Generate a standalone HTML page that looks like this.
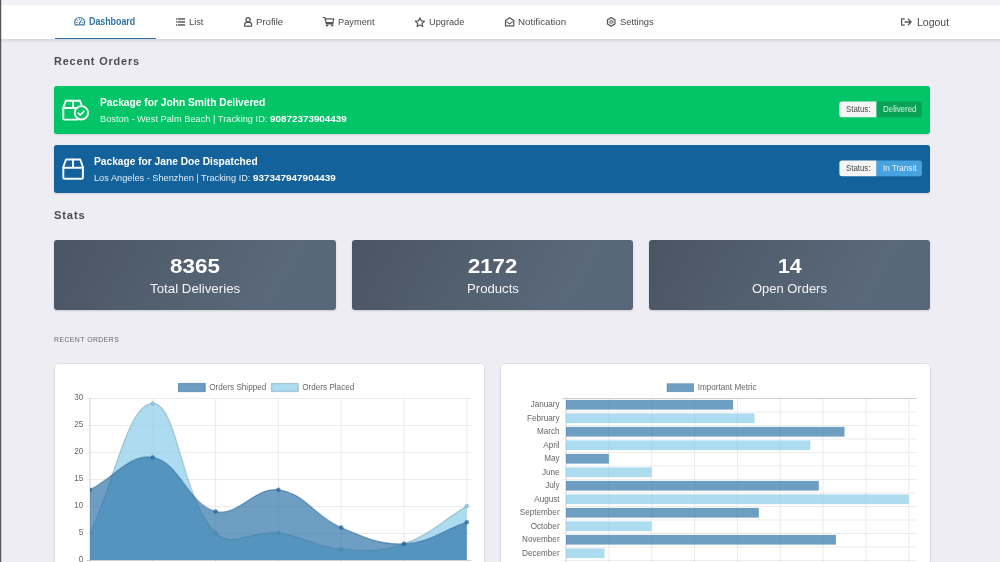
<!DOCTYPE html>
<html><head><meta charset="utf-8"><title>Dashboard</title>
<style>
*{box-sizing:border-box;margin:0;padding:0}
html,body{width:1000px;height:562px;overflow:hidden}
body{background:#ededf3;font-family:"Liberation Sans",sans-serif;position:relative;color:#4a4a4a}
.abs{position:absolute}
.nav{position:absolute;left:-10px;top:5px;width:1020px;height:34px;background:#fff;box-shadow:0 1px 4px rgba(10,10,10,.15)}
.edge{position:absolute;left:0;top:0;width:1px;height:562px;background:#54545a;box-shadow:0.4px 0 0.6px rgba(80,80,90,.55)}
.strip{position:absolute;left:0;top:0;width:1000px;height:5px;background:linear-gradient(#f3f3f7 0,#f3f3f7 3.4px,#ebebf0 4.1px,#f6f6f9 5px)}
.uline{position:absolute;left:54.5px;top:37.6px;width:101.3px;height:1.4px;background:#3273a6}
.tx{position:absolute;white-space:nowrap;transform-origin:0 50%;line-height:normal}
.card{position:absolute;left:54px;width:876.4px;height:48px;border-radius:2.7px;box-shadow:0 1px 2px rgba(10,10,10,.12)}
.tag{position:absolute;height:16px}
.stat{position:absolute;top:240px;height:70px;border-radius:3px;box-shadow:0 1px 2px rgba(10,10,10,.15);
 background:linear-gradient(120deg,#4a5564 0%,#525f6e 40%,#5a687b 76%,#58667a 100%)}
.box{position:absolute;top:363.8px;height:210px;background:#fff;border-radius:3.5px;box-shadow:0 0 0 .8px rgba(10,10,10,.06),0 2px 5px -1px rgba(10,10,10,.1)}
.tl{position:absolute;left:0;top:0;width:1000px;height:562px;will-change:transform}
.tick{position:absolute;font-size:8.15px;line-height:10px;color:#666;white-space:nowrap}
</style></head><body>
<div class="nav"></div>
<div class="strip"></div>
<div class="edge"></div>
<div class="uline"></div>

<div class="card" style="top:86px;background:#04c468"></div>
<div class="card" style="top:144.6px;background:#14629c"></div>

<svg class="abs" style="left:0;top:0" width="1000" height="200" viewBox="0 0 1000 200">
<path d="M842.00 101.45H876.60V117.25H842.00a2.6 2.6 0 0 1 -2.6 -2.6V104.05a2.6 2.6 0 0 1 2.6 -2.6Z" fill="#f5f5f5"/>
<path d="M876.60 101.45H919.30a2.6 2.6 0 0 1 2.6 2.6V114.65a2.6 2.6 0 0 1 -2.6 2.6H876.60Z" fill="#0aa257"/>
<path d="M842.00 160.40H876.60V176.20H842.00a2.6 2.6 0 0 1 -2.6 -2.6V163.00a2.6 2.6 0 0 1 2.6 -2.6Z" fill="#f5f5f5"/>
<path d="M876.60 160.40H919.30a2.6 2.6 0 0 1 2.6 2.6V173.60a2.6 2.6 0 0 1 -2.6 2.6H876.60Z" fill="#47a3e0"/>
</svg>
<div class="stat" style="left:54px;width:281.7px"></div>
<div class="stat" style="left:351.5px;width:281.6px"></div>
<div class="stat" style="left:648.9px;width:281.5px"></div>

<div class="box" style="left:54.7px;width:429.4px"></div>
<div class="box" style="left:500.7px;width:429.4px"></div>
<svg class="abs" style="left:0;top:0" width="1000" height="562" viewBox="0 0 1000 562">
<line x1="90.00" y1="398" x2="90.00" y2="565" stroke="#b8b8b8" stroke-width="0.67"/>
<line x1="152.80" y1="398" x2="152.80" y2="565" stroke="#e2e2e2" stroke-width="0.67"/>
<line x1="215.60" y1="398" x2="215.60" y2="565" stroke="#e2e2e2" stroke-width="0.67"/>
<line x1="278.40" y1="398" x2="278.40" y2="565" stroke="#e2e2e2" stroke-width="0.67"/>
<line x1="341.20" y1="398" x2="341.20" y2="565" stroke="#e2e2e2" stroke-width="0.67"/>
<line x1="404.00" y1="398" x2="404.00" y2="565" stroke="#e2e2e2" stroke-width="0.67"/>
<line x1="466.80" y1="398" x2="466.80" y2="565" stroke="#e2e2e2" stroke-width="0.67"/>
<line x1="86.5" y1="398.50" x2="471.20" y2="398.50" stroke="#e2e2e2" stroke-width="0.67"/>
<line x1="86.5" y1="425.50" x2="471.20" y2="425.50" stroke="#e2e2e2" stroke-width="0.67"/>
<line x1="86.5" y1="452.50" x2="471.20" y2="452.50" stroke="#e2e2e2" stroke-width="0.67"/>
<line x1="86.5" y1="479.50" x2="471.20" y2="479.50" stroke="#e2e2e2" stroke-width="0.67"/>
<line x1="86.5" y1="506.50" x2="471.20" y2="506.50" stroke="#e2e2e2" stroke-width="0.67"/>
<line x1="86.5" y1="533.50" x2="471.20" y2="533.50" stroke="#e2e2e2" stroke-width="0.67"/>
<line x1="86.5" y1="560.50" x2="471.20" y2="560.50" stroke="#b8b8b8" stroke-width="0.67"/>
<clipPath id="ca"><rect x="90" y="395" width="381.2" height="170"/></clipPath><g clip-path="url(#ca)">
<path d="M90.00,533.00 C115.12,481.16 127.68,403.40 152.80,403.40 C177.92,403.40 180.62,496.90 215.60,533.00 C230.86,548.74 253.68,529.81 278.40,533.00 C303.92,536.29 315.72,547.01 341.20,549.20 C365.96,551.33 380.77,551.79 404.00,543.80 C431.01,534.51 441.68,521.12 466.80,506.00 L466.80,560 L90,560 Z" fill="rgba(130,202,232,0.66)" stroke="none"/>
<path d="M90.00,533.00 C115.12,481.16 127.68,403.40 152.80,403.40 C177.92,403.40 180.62,496.90 215.60,533.00 C230.86,548.74 253.68,529.81 278.40,533.00 C303.92,536.29 315.72,547.01 341.20,549.20 C365.96,551.33 380.77,551.79 404.00,543.80 C431.01,534.51 441.68,521.12 466.80,506.00" fill="none" stroke="rgba(120,160,180,0.5)" stroke-width="1.3"/>
<circle cx="90.00" cy="533.00" r="2" fill="rgba(130,200,232,0.8)" stroke="rgba(120,160,180,0.5)" stroke-width="0.67"/>
<circle cx="152.80" cy="403.40" r="2" fill="rgba(130,200,232,0.8)" stroke="rgba(120,160,180,0.5)" stroke-width="0.67"/>
<circle cx="215.60" cy="533.00" r="2" fill="rgba(130,200,232,0.8)" stroke="rgba(120,160,180,0.5)" stroke-width="0.67"/>
<circle cx="278.40" cy="533.00" r="2" fill="rgba(130,200,232,0.8)" stroke="rgba(120,160,180,0.5)" stroke-width="0.67"/>
<circle cx="341.20" cy="549.20" r="2" fill="rgba(130,200,232,0.8)" stroke="rgba(120,160,180,0.5)" stroke-width="0.67"/>
<circle cx="404.00" cy="543.80" r="2" fill="rgba(130,200,232,0.8)" stroke="rgba(120,160,180,0.5)" stroke-width="0.67"/>
<circle cx="466.80" cy="506.00" r="2" fill="rgba(130,200,232,0.8)" stroke="rgba(120,160,180,0.5)" stroke-width="0.67"/>
<path d="M90.00,489.80 C115.12,476.84 129.67,453.42 152.80,457.40 C179.91,462.06 187.72,504.21 215.60,511.40 C237.96,517.17 254.52,486.72 278.40,489.80 C304.76,493.20 314.54,516.14 341.20,527.60 C364.78,537.74 379.18,544.87 404.00,543.80 C429.42,542.71 441.68,530.84 466.80,522.20 L466.80,560 L90,560 Z" fill="rgba(41,113,166,0.68)" stroke="none"/>
<path d="M90.00,489.80 C115.12,476.84 129.67,453.42 152.80,457.40 C179.91,462.06 187.72,504.21 215.60,511.40 C237.96,517.17 254.52,486.72 278.40,489.80 C304.76,493.20 314.54,516.14 341.20,527.60 C364.78,537.74 379.18,544.87 404.00,543.80 C429.42,542.71 441.68,530.84 466.80,522.20" fill="none" stroke="rgba(41,100,150,0.5)" stroke-width="1.3"/>
<circle cx="90.00" cy="489.80" r="2" fill="rgba(36,104,158,0.75)" stroke="rgba(41,100,150,0.5)" stroke-width="0.67"/>
<circle cx="152.80" cy="457.40" r="2" fill="rgba(36,104,158,0.75)" stroke="rgba(41,100,150,0.5)" stroke-width="0.67"/>
<circle cx="215.60" cy="511.40" r="2" fill="rgba(36,104,158,0.75)" stroke="rgba(41,100,150,0.5)" stroke-width="0.67"/>
<circle cx="278.40" cy="489.80" r="2" fill="rgba(36,104,158,0.75)" stroke="rgba(41,100,150,0.5)" stroke-width="0.67"/>
<circle cx="341.20" cy="527.60" r="2" fill="rgba(36,104,158,0.75)" stroke="rgba(41,100,150,0.5)" stroke-width="0.67"/>
<circle cx="404.00" cy="543.80" r="2" fill="rgba(36,104,158,0.75)" stroke="rgba(41,100,150,0.5)" stroke-width="0.67"/>
<circle cx="466.80" cy="522.20" r="2" fill="rgba(36,104,158,0.75)" stroke="rgba(41,100,150,0.5)" stroke-width="0.67"/>
</g>
<rect x="178.5" y="383.5" width="26.7" height="8" fill="rgba(41,113,166,0.68)" stroke="rgba(41,100,150,0.5)" stroke-width="1.3"/>
<rect x="271.5" y="383.5" width="26.7" height="8" fill="rgba(130,202,232,0.66)" stroke="rgba(120,160,180,0.5)" stroke-width="1.3"/>
<line x1="566.00" y1="398" x2="566.00" y2="565" stroke="#b8b8b8" stroke-width="0.67"/>
<line x1="608.85" y1="398" x2="608.85" y2="565" stroke="#e2e2e2" stroke-width="0.67"/>
<line x1="651.70" y1="398" x2="651.70" y2="565" stroke="#e2e2e2" stroke-width="0.67"/>
<line x1="694.55" y1="398" x2="694.55" y2="565" stroke="#e2e2e2" stroke-width="0.67"/>
<line x1="737.40" y1="398" x2="737.40" y2="565" stroke="#e2e2e2" stroke-width="0.67"/>
<line x1="780.25" y1="398" x2="780.25" y2="565" stroke="#e2e2e2" stroke-width="0.67"/>
<line x1="823.10" y1="398" x2="823.10" y2="565" stroke="#e2e2e2" stroke-width="0.67"/>
<line x1="865.95" y1="398" x2="865.95" y2="565" stroke="#e2e2e2" stroke-width="0.67"/>
<line x1="908.80" y1="398" x2="908.80" y2="565" stroke="#e2e2e2" stroke-width="0.67"/>
<line x1="562.7" y1="398.50" x2="917" y2="398.50" stroke="#b8b8b8" stroke-width="0.67"/>
<line x1="562.7" y1="412.00" x2="917" y2="412.00" stroke="#e2e2e2" stroke-width="0.67"/>
<line x1="562.7" y1="425.50" x2="917" y2="425.50" stroke="#e2e2e2" stroke-width="0.67"/>
<line x1="562.7" y1="439.00" x2="917" y2="439.00" stroke="#e2e2e2" stroke-width="0.67"/>
<line x1="562.7" y1="452.50" x2="917" y2="452.50" stroke="#e2e2e2" stroke-width="0.67"/>
<line x1="562.7" y1="466.00" x2="917" y2="466.00" stroke="#e2e2e2" stroke-width="0.67"/>
<line x1="562.7" y1="479.50" x2="917" y2="479.50" stroke="#e2e2e2" stroke-width="0.67"/>
<line x1="562.7" y1="493.00" x2="917" y2="493.00" stroke="#e2e2e2" stroke-width="0.67"/>
<line x1="562.7" y1="506.50" x2="917" y2="506.50" stroke="#e2e2e2" stroke-width="0.67"/>
<line x1="562.7" y1="520.00" x2="917" y2="520.00" stroke="#e2e2e2" stroke-width="0.67"/>
<line x1="562.7" y1="533.50" x2="917" y2="533.50" stroke="#e2e2e2" stroke-width="0.67"/>
<line x1="562.7" y1="547.00" x2="917" y2="547.00" stroke="#e2e2e2" stroke-width="0.67"/>
<line x1="562.7" y1="560.50" x2="917" y2="560.50" stroke="#e2e2e2" stroke-width="0.67"/>
<rect x="566.00" y="399.89" width="167.12" height="9.72" fill="rgba(41,113,166,0.68)"/>
<rect x="566.00" y="413.39" width="188.54" height="9.72" fill="rgba(130,202,232,0.66)"/>
<rect x="566.00" y="426.89" width="278.53" height="9.72" fill="rgba(41,113,166,0.68)"/>
<rect x="566.00" y="440.39" width="244.25" height="9.72" fill="rgba(130,202,232,0.66)"/>
<rect x="566.00" y="453.89" width="42.85" height="9.72" fill="rgba(41,113,166,0.68)"/>
<rect x="566.00" y="467.39" width="85.70" height="9.72" fill="rgba(130,202,232,0.66)"/>
<rect x="566.00" y="480.89" width="252.81" height="9.72" fill="rgba(41,113,166,0.68)"/>
<rect x="566.00" y="494.39" width="342.80" height="9.72" fill="rgba(130,202,232,0.66)"/>
<rect x="566.00" y="507.89" width="192.83" height="9.72" fill="rgba(41,113,166,0.68)"/>
<rect x="566.00" y="521.39" width="85.70" height="9.72" fill="rgba(130,202,232,0.66)"/>
<rect x="566.00" y="534.89" width="269.95" height="9.72" fill="rgba(41,113,166,0.68)"/>
<rect x="566.00" y="548.39" width="38.56" height="9.72" fill="rgba(130,202,232,0.66)"/>
<rect x="667" y="383.7" width="26.7" height="8" fill="rgba(41,113,166,0.68)" stroke="rgba(41,100,150,0.5)" stroke-width="0.67"/>
</svg>
<div class="tl">
<div class="tx" style="left:89.40px;top:15.60px;font-size:10.30px;color:#3273a6;font-weight:bold;transform:scaleX(0.8587);">Dashboard</div>
<div class="tx" style="left:189.10px;top:16.00px;font-size:9.50px;color:#4a4a4a;transform:scaleX(0.9731);">List</div>
<div class="tx" style="left:256.00px;top:16.00px;font-size:9.50px;color:#4a4a4a;transform:scaleX(1.0098);">Profile</div>
<div class="tx" style="left:338.10px;top:16.00px;font-size:9.50px;color:#4a4a4a;transform:scaleX(0.9733);">Payment</div>
<div class="tx" style="left:429.40px;top:16.00px;font-size:9.50px;color:#4a4a4a;transform:scaleX(0.9683);">Upgrade</div>
<div class="tx" style="left:518.30px;top:16.00px;font-size:9.50px;color:#4a4a4a;transform:scaleX(1.0234);">Notification</div>
<div class="tx" style="left:620.30px;top:16.00px;font-size:9.50px;color:#4a4a4a;transform:scaleX(0.9817);">Settings</div>
<div class="tx" style="left:916.60px;top:15.61px;font-size:10.60px;color:#4a4a4a;transform:scaleX(0.9905);">Logout</div>
<div class="tx" style="left:54.20px;top:54.81px;font-size:10.70px;color:#4b4b55;font-weight:bold;letter-spacing:0.80px;transform:scaleX(1.0219);">Recent Orders</div>
<div class="tx" style="left:54.30px;top:208.81px;font-size:10.70px;color:#4b4b55;font-weight:bold;letter-spacing:0.80px;transform:scaleX(1.0450);">Stats</div>
<div class="tx" style="left:99.50px;top:97.01px;font-size:10.30px;color:#fff;font-weight:bold;transform:scaleX(0.9926);">Package for John Smith Delivered</div>
<div class="tx" style="left:99.50px;top:114.21px;font-size:9.30px;color:#e4fbee;transform:scaleX(0.9958);">Boston - West Palm Beach | Tracking ID:</div>
<div class="tx" style="left:269.60px;top:114.21px;font-size:9.30px;color:#fff;font-weight:bold;transform:scaleX(1.0609);">90872373904439</div>
<div class="tx" style="left:94.20px;top:156.01px;font-size:10.30px;color:#fff;font-weight:bold;transform:scaleX(0.9898);">Package for Jane Doe Dispatched</div>
<div class="tx" style="left:94.20px;top:173.21px;font-size:9.30px;color:#e3eef7;transform:scaleX(0.9900);">Los Angeles - Shenzhen | Tracking ID:</div>
<div class="tx" style="left:253.30px;top:173.21px;font-size:9.30px;color:#fff;font-weight:bold;transform:scaleX(1.0663);">937347947904439</div>
<div class="tx" style="left:845.50px;top:103.82px;font-size:8.40px;color:#4a4a4a;transform:scaleX(0.9395);">Status:</div>
<div class="tx" style="left:882.50px;top:103.82px;font-size:8.40px;color:#d9f7e6;transform:scaleX(0.9466);">Delivered</div>
<div class="tx" style="left:845.50px;top:162.82px;font-size:8.40px;color:#4a4a4a;transform:scaleX(0.9395);">Status:</div>
<div class="tx" style="left:882.50px;top:162.82px;font-size:8.40px;color:#e6f2fb;transform:scaleX(0.9723);">In Transit</div>
<div class="tx" style="left:169.90px;top:254.10px;font-size:20.60px;color:#fff;font-weight:bold;transform:scaleX(1.0888);">8365</div>
<div class="tx" style="left:150.10px;top:281.10px;font-size:12.90px;color:#f3f5f7;transform:scaleX(1.0319);">Total Deliveries</div>
<div class="tx" style="left:467.60px;top:254.10px;font-size:20.60px;color:#fff;font-weight:bold;transform:scaleX(1.0736);">2172</div>
<div class="tx" style="left:466.50px;top:281.10px;font-size:12.90px;color:#f3f5f7;transform:scaleX(1.0201);">Products</div>
<div class="tx" style="left:777.90px;top:254.10px;font-size:20.60px;color:#fff;font-weight:bold;transform:scaleX(1.0340);">14</div>
<div class="tx" style="left:752.00px;top:281.10px;font-size:12.90px;color:#f3f5f7;transform:scaleX(1.0051);">Open Orders</div>
<div class="tx" style="left:54.30px;top:334.50px;font-size:7.70px;color:#686870;letter-spacing:0.50px;transform:scaleX(0.8931);">RECENT ORDERS</div>
<div class="tick" style="left:40px;width:43.3px;top:393.0px;text-align:right">30</div>
<div class="tick" style="left:40px;width:43.3px;top:420.0px;text-align:right">25</div>
<div class="tick" style="left:40px;width:43.3px;top:447.0px;text-align:right">20</div>
<div class="tick" style="left:40px;width:43.3px;top:474.0px;text-align:right">15</div>
<div class="tick" style="left:40px;width:43.3px;top:501.0px;text-align:right">10</div>
<div class="tick" style="left:40px;width:43.3px;top:528.0px;text-align:right">5</div>
<div class="tick" style="left:40px;width:43.3px;top:555.0px;text-align:right">0</div>
<div class="tick" style="left:500px;width:59.6px;top:400.2px;text-align:right">January</div>
<div class="tick" style="left:500px;width:59.6px;top:413.8px;text-align:right">February</div>
<div class="tick" style="left:500px;width:59.6px;top:427.2px;text-align:right">March</div>
<div class="tick" style="left:500px;width:59.6px;top:440.8px;text-align:right">April</div>
<div class="tick" style="left:500px;width:59.6px;top:454.2px;text-align:right">May</div>
<div class="tick" style="left:500px;width:59.6px;top:467.8px;text-align:right">June</div>
<div class="tick" style="left:500px;width:59.6px;top:481.2px;text-align:right">July</div>
<div class="tick" style="left:500px;width:59.6px;top:494.8px;text-align:right">August</div>
<div class="tick" style="left:500px;width:59.6px;top:508.2px;text-align:right">September</div>
<div class="tick" style="left:500px;width:59.6px;top:521.8px;text-align:right">October</div>
<div class="tick" style="left:500px;width:59.6px;top:535.2px;text-align:right">November</div>
<div class="tick" style="left:500px;width:59.6px;top:548.8px;text-align:right">December</div>
<div class="tick" style="left:209.3px;top:382.5px">Orders Shipped</div>
<div class="tick" style="left:302.3px;top:382.5px">Orders Placed</div>
<div class="tick" style="left:697.8px;top:382.5px">Important Metric</div>
</div>
<svg class="abs" style="left:0;top:0" width="1000" height="562" viewBox="0 0 1000 562" fill="none" stroke-linecap="round" stroke-linejoin="round">
<!-- dashboard -->
<g stroke="#3a79ab" stroke-width="1.15">
<path d="M75.15 24.9 A5.08 5.08 0 1 1 84.15 24.9 Z"/>
<path d="M76.3 22.6h1.0M82.0 22.6h1.0M79.65 19.0v0.7M77.3 20.2l0.5 0.5" stroke-width="0.9"/>
<path d="M79.5 23.0L81.6 20.0" stroke-width="1.2"/>
<circle cx="79.55" cy="23.1" r="0.75" fill="#3a79ab" stroke="none"/>
</g>
<!-- list -->
<g fill="#5a5a5a" stroke="none">
<rect x="176" y="18.2" width="1.3" height="1.5"/><rect x="178" y="18.2" width="7" height="1.5"/>
<rect x="176" y="21.2" width="1.3" height="1.5"/><rect x="178" y="21.2" width="7" height="1.5"/>
<rect x="176" y="24.2" width="1.3" height="1.5"/><rect x="178" y="24.2" width="7" height="1.5"/>
</g>
<g stroke="#555" stroke-width="1.2">
<!-- profile -->
<circle cx="248.1" cy="19.7" r="2.15"/>
<path d="M244.6 26.2v-1.6a2.3 2.3 0 0 1 2.3-2.3h2.4a2.3 2.3 0 0 1 2.3 2.3v1.6Z"/>
<!-- cart -->
<path d="M323.3 17.5h1.5l1.5 6.3h6.8M325.6 18.9h8.2l-0.9 3.8h-6.4"/>
<circle cx="327" cy="25.5" r="0.8" fill="#5a5a5a" stroke-width="0.7"/><circle cx="332.1" cy="25.5" r="0.8" fill="#5a5a5a" stroke-width="0.7"/>
<!-- star -->
<path d="M419.9 17.9l1.35 2.9 3.15 0.4-2.3 2.2 0.6 3.1-2.8-1.55-2.8 1.55 0.6-3.1-2.3-2.2 3.15-0.4Z"/>
<!-- envelope open -->
<path d="M505.5 20.6l4.15-2.9 4.15 2.9v5.3h-8.3Z"/>
<path d="M506.9 21.9l2.75 2 2.75-2" stroke-width="1.1"/>
<!-- gear -->
<path d="M611.2 17.6l3.75 2.15v4.3l-3.75 2.15-3.75-2.15v-4.3Z" fill="#e9e9e9"/>
<circle cx="611.2" cy="21.9" r="1.4" fill="#fff" stroke-width="0.9"/>
<!-- logout -->
<path d="M904.3 18.9h-2.7v6.2h2.7" stroke-width="1.3"/>
<path d="M905 22h5.8M908.3 19.2l2.8 2.8-2.8 2.8" stroke-width="1.3"/>
</g>
<!-- package check (green card) -->
<g stroke="#f4fff8" stroke-width="1.9">
<path d="M77.8 119.6H64.5a1.2 1.2 0 0 1-1.2-1.2V107.6l2.5-6.8h14.2l1.6 4.2"/>
<path d="M63.3 108h12.6M73.1 100.8v7.2"/>
<circle cx="81.4" cy="112.8" r="6.7"/>
<path d="M78.2 113.1l2.1 1.9 3.5-3.6" stroke-width="1.7"/>
</g>
<!-- package (blue card) -->
<g stroke="#f6fbff" stroke-width="1.95">
<path d="M63.3 167l2.7-7.5h14.2l2.7 7.5V177.5a1.2 1.2 0 0 1-1.2 1.2H64.5a1.2 1.2 0 0 1-1.2-1.2Z"/>
<path d="M63.3 167.7h19.6M73 159.5v8.2"/>
</g>
</svg>

</body></html>
